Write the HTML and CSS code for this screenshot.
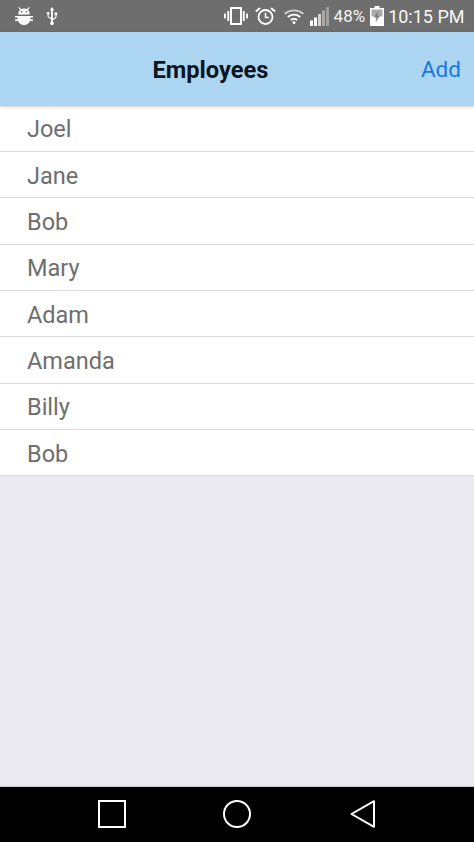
FILE: index.html
```html
<!DOCTYPE html>
<html lang="en">
<head>
<meta charset="utf-8">
<title>Employees</title>
<link rel="stylesheet" href="styles.css">
</head>
<body>
<div class="screen">
  <div class="status">
    <div class="status-left">
      <svg class="ic-android" viewBox="0 0 18 18" width="18" height="18"><path fill="#fff" d="M4 0l2.100 2C7 1.600 8 1.400 9 1.400s2 .2 2.900.6L14 0l.8.7-1.900 2c1 .9 1.600 2.100 1.700 3.500v1.300H3.400V6.200c.1-1.400.7-2.600 1.700-3.500L3.200.7z"/><circle cx="6.500" cy="4.800" r=".9" fill="#6e6e6e"/><circle cx="11.500" cy="4.800" r=".9" fill="#6e6e6e"/><path fill="#fff" d="M0 9h18v1.500h-2.500v2H18V14h-3.100c-1 2.500-3.200 4-5.900 4s-4.900-1.500-5.900-4H0v-1.500h2.500v-2H0z"/></svg>
      <svg class="ic-usb" viewBox="0 0 14 18" width="14" height="18"><path fill="#fff" d="M7 0l2.200 3.200H7.900v8.600l2.500-1.700V8.300H9.500V5.600h2.700v2.700h-.7v2.400L7.900 13.200v1.500a1.800 1.800 0 1 1-1.800 0v-2.200L2.600 10V7.600a1.400 1.400 0 1 1 1 0v1.800l2.500 1.700V3.200H4.800z"/></svg>
    </div>
    <div class="status-right">
      <svg class="ic-vib" viewBox="0 0 24 18" width="24" height="18"><rect x="7" y="1" width="10" height="16" fill="none" stroke="#fff" stroke-width="2"/><path fill="#fff" d="M3.300 4h1.900v10H3.300zM18.800 4h1.900v10h-1.900zM0 6.500h1.800v5H0zM22.200 6.500H24v5h-1.800z"/></svg>
      <svg class="ic-alarm" viewBox="0 0 21 18" width="21" height="18"><circle cx="10.500" cy="10" r="7" fill="none" stroke="#fff" stroke-width="1.800"/><path d="M10.500 5.800V10.500h3.400" fill="none" stroke="#fff" stroke-width="1.500"/><path d="M.8 4.600L5 1M20.200 4.600L16 1" stroke="#fff" stroke-width="2"/></svg>
      <svg class="ic-wifi" viewBox="0 0 20 15" width="20" height="15"><path d="M.7 4.800C6.300.2 13.700.2 19.300 4.800" fill="none" stroke="#d0d0d0" stroke-width="1.900"/><path d="M3.800 8C7.500 5 12.500 5 16.200 8" fill="none" stroke="#fff" stroke-width="1.900"/><path d="M6.800 11c2-1.400 4.400-1.400 6.400 0" fill="none" stroke="#fff" stroke-width="1.900"/><circle cx="10" cy="13.500" r="1.500" fill="#fff"/></svg>
      <svg class="ic-signal" viewBox="0 0 19 19" width="19" height="19"><rect x="0" y="13.500" width="3" height="5.500" fill="#fff"/><rect x="4" y="10.500" width="3" height="8.500" fill="#fff"/><rect x="8" y="7" width="3" height="12" fill="#d4d4d4"/><rect x="12" y="3.500" width="3" height="15.500" fill="#aaa"/><rect x="16" y="0" width="3" height="19" fill="#a0a0a0"/></svg>
      <span class="pct">48%</span>
      <svg class="ic-batt" viewBox="0 0 14 20" width="14" height="20"><path fill="#fff" d="M4.500 0h5v2H14v18H0V2h4.500z"/><rect x="1.500" y="3.500" width="11" height="7" fill="#a9a9a9"/><path fill="#7d7d7d" d="M8 4.500L4 11.500h2.500l-1 5L10 9.500H7.300z"/></svg>
      <span class="time">10:15 PM</span>
    </div>
  </div>
  <header class="header">
    <h1 class="title">Employees</h1>
    <a class="add">Add</a>
  </header>
  <ul class="list">
    <li class="row">Joel</li>
    <li class="row">Jane</li>
    <li class="row">Bob</li>
    <li class="row">Mary</li>
    <li class="row">Adam</li>
    <li class="row">Amanda</li>
    <li class="row">Billy</li>
    <li class="row">Bob</li>
  </ul>
  <div class="spacer"></div>
  <nav class="nav">
    <svg viewBox="0 0 28 28" width="28" height="28"><rect x="1" y="1" width="26" height="26" fill="none" stroke="#fff" stroke-width="2"/></svg>
    <svg viewBox="0 0 28 28" width="28" height="28"><circle cx="14" cy="14" r="13" fill="none" stroke="#fff" stroke-width="2"/></svg>
    <svg class="tri" viewBox="0 0 25 28" width="25" height="28"><path d="M24 1.200L1.500 14L24 26.800z" fill="none" stroke="#fff" stroke-width="2" stroke-linejoin="round"/></svg>
  </nav>
</div>
</body>
</html>
```
FILE: styles.css
```css
* { box-sizing: border-box; }
html, body { margin: 0; padding: 0; height: 100%; }
body { font-family: Roboto, "Liberation Sans", sans-serif; background: #e9e9ef; overflow: hidden; }
.screen { width: 474px; height: 842px; display: flex; flex-direction: column; }
.status { height: 32px; flex: none; background: #6e6e6e; display: flex; align-items: center; justify-content: space-between; padding: 0 9.500px 0 15px; color: #fff; }
.status-left { display: flex; align-items: center; gap: 12px; }
.status-right { display: flex; align-items: center; }
.ic-alarm { margin-left: 7px; }
.ic-wifi { margin-left: 8px; }
.ic-signal { margin-left: 6px; }
.pct { font-size: 17px; color: #f4f4f4; margin-left: 5px; }
.ic-batt { margin-left: 5px; }
.time { font-size: 18px; color: #f8f8f8; margin-left: 4px; }
.header { height: 73.600px; flex: none; background: #acd5f2; display: flex; align-items: center; padding: 3px 13px 0 0; box-shadow: 0 1px 3px rgba(0,0,0,.2); position: relative; z-index: 1; }
.title { flex: 1; margin: 0; text-align: center; font-size: 23.700px; font-weight: 700; color: #0c1622; }
.add { font-size: 22.500px; color: #1a78e6; margin-bottom: 2px; }
.list { list-style: none; margin: 0; padding: 0; background: #fff; flex: none; }
.row { height: 46.350px; border-bottom: 1px solid #d9d9d9; padding: 2px 0 0 27px; display: flex; align-items: center; font-size: 23.500px; color: #6e6e6e; }
.spacer { flex: 1; background: #e9e9ef; }
.nav { height: 56px; flex: none; background: #000; border-top: 1px solid #c8c8c8; display: flex; align-items: center; gap: 97px; padding: 0 0 1px 98px; }
.tri { margin-left: 2px; }
```
